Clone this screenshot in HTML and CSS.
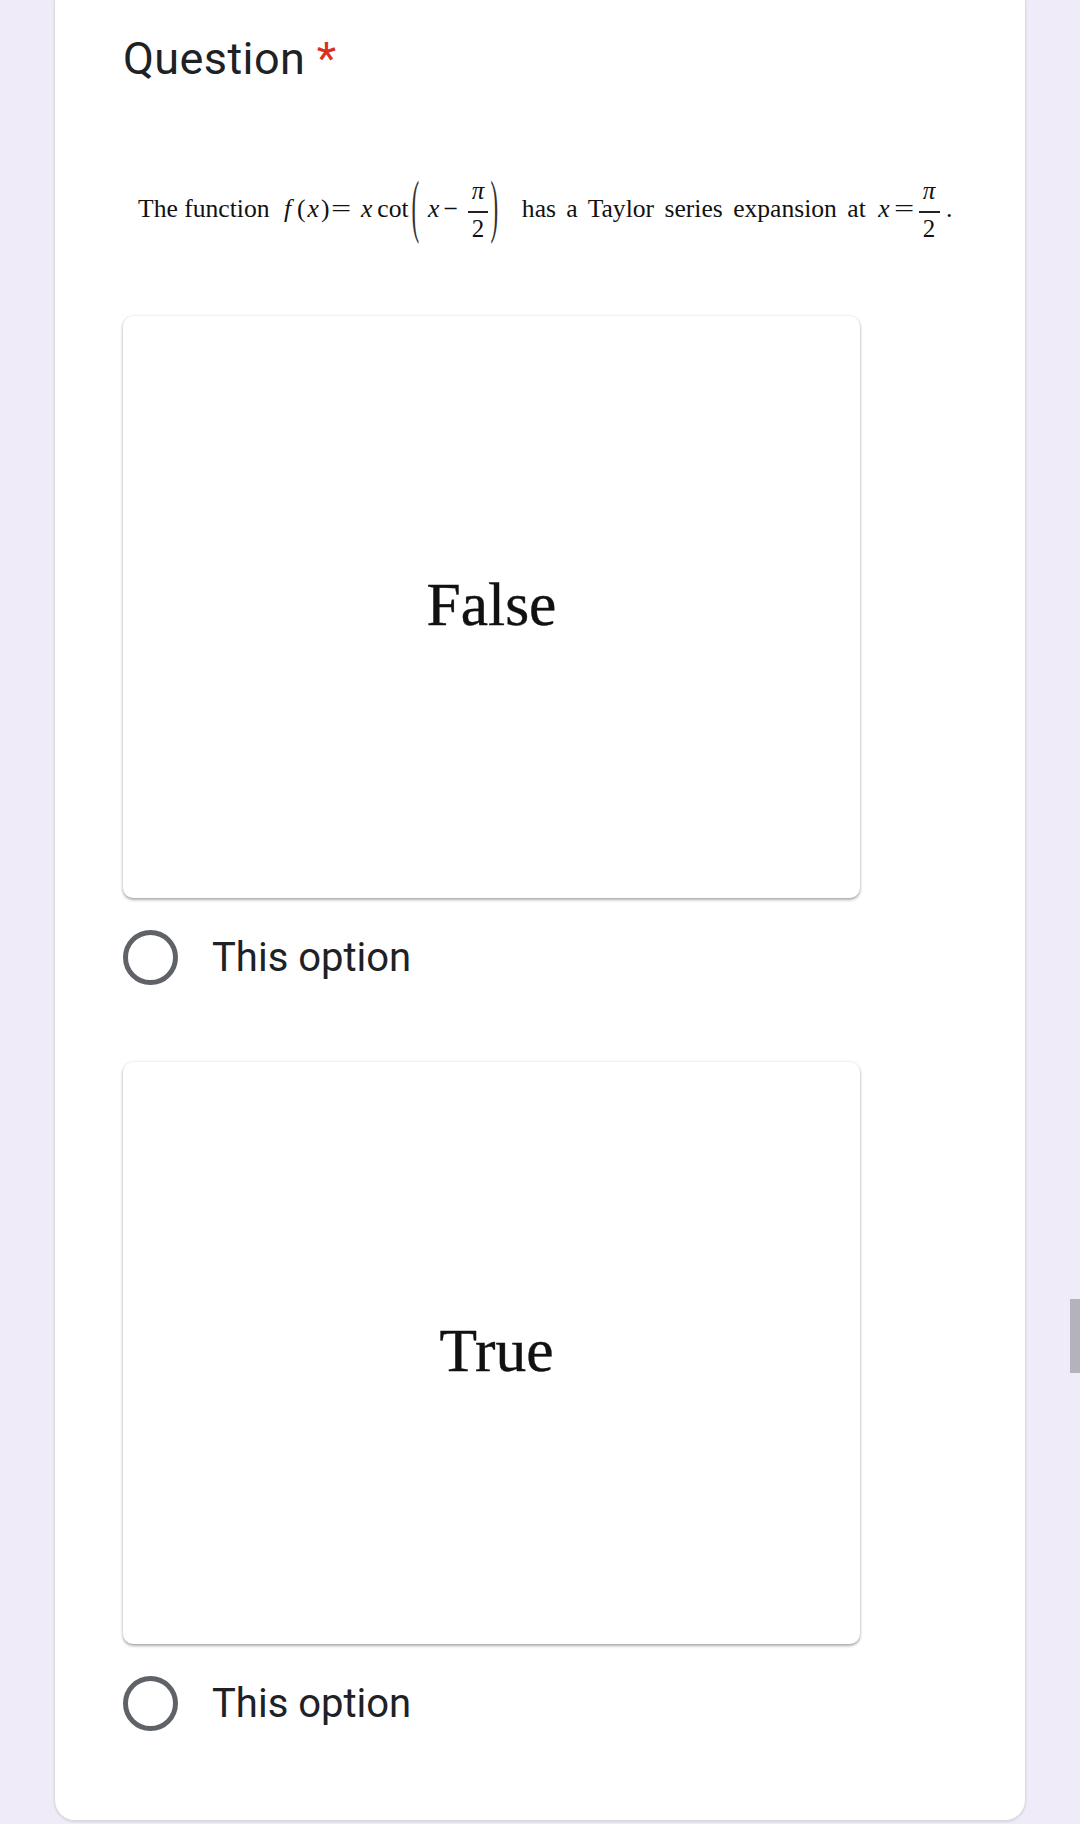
FILE: index.html
```html
<!DOCTYPE html>
<html lang="en">
<head>
    <meta charset="UTF-8">
    <meta name="viewport" content="width=device-width, initial-scale=1.0">
    <title>Question</title>
    <link rel="stylesheet" href="styles.css">
</head>
<body>
    <div class="form-card">
        <div class="question-title">Question <span class="required">*</span></div>

        <div class="math-line">
            <span class="word">The function</span>
            <span class="gap-lg"></span><span class="it f">f</span>(<span class="it x-in">x</span>)<span class="op eq">=</span><span class="it x-cot">x</span><span class="fn">cot</span><span class="paren left">(</span><span class="it">x</span><span class="op minus">&minus;</span><span class="frac"><span class="num">&pi;</span><span class="bar"></span><span class="den">2</span></span><span class="paren right">)</span><span class="gap-lg"></span>
            <span class="word wide">has a Taylor series expansion at</span>
            <span class="gap-md"></span><span class="it">x</span><span class="op eq-sm">=</span><span class="frac end"><span class="num">&pi;</span><span class="bar"></span><span class="den">2</span></span><span class="dot">.</span>
        </div>

        <div class="choice">
            <div class="choice-image"><span>False</span></div>
            <label class="choice-row">
                <span class="radio"></span>
                <span class="choice-label">This option</span>
            </label>
        </div>

        <div class="choice">
            <div class="choice-image"><span class="shift">True</span></div>
            <label class="choice-row">
                <span class="radio"></span>
                <span class="choice-label">This option</span>
            </label>
        </div>
    </div>

    <div class="scroll-thumb"></div>
</body>
</html>
```

FILE: styles.css
```css
html, body {
    margin: 0;
    padding: 0;
}
body {
    background: #f0ebf8;
    font-family: Roboto, "Noto Sans", Arial, sans-serif;
    height: 1824px;
    overflow: hidden;
    position: relative;
}
.form-card {
    margin: 0 54px;
    background: #fff;
    border: 1px solid #dadce0;
    border-top: none;
    border-radius: 0 0 21px 21px;
    padding: 31px 68px 89px 68px;
    box-shadow: 0 1px 2px rgba(60, 64, 67, 0.15);
}
.question-title {
    font-size: 45px;
    line-height: 56px;
    letter-spacing: 0.4px;
    color: #202124;
}
.required {
    color: #d93025;
}

/* equation line */
.math-line {
    margin-top: 94px;
    padding-left: 15px;
    font-family: "Liberation Serif", "Times New Roman", serif;
    font-size: 25.6px;
    line-height: 30px;
    color: #111;
    white-space: nowrap;
}
.word.wide {
    word-spacing: 4px;
}
.it {
    font-style: italic;
}
.f {
    margin-right: 6px;
}
.x-in {
    margin: 0 2px;
}
.x-cot {
    margin-right: 5px;
}
.gap-lg {
    display: inline-block;
    width: 8px;
}
.gap-md {
    display: inline-block;
    width: 6px;
}
.op {
    display: inline-block;
}
.eq {
    margin: 0 12px 0 5px;
    transform: scaleX(1.4);
}
.eq-sm {
    margin: 0 5px 0 7.5px;
    transform: scaleX(1.4);
}
.minus {
    margin: 0 8px 0 4px;
}
.paren {
    display: inline-block;
    transform: translateY(-5px) scale(0.9, 2.75);
    transform-origin: 50% 45%;
    color: #333;
}
.paren.left {
    margin: 0 9px 0 2px;
}
.paren.right {
    margin: 0 9px 0 0;
}
.frac {
    display: inline-flex;
    flex-direction: column;
    align-items: center;
    vertical-align: 18px;
    margin: 0 2px;
    min-width: 20px;
}
.num, .den {
    line-height: 20px;
    font-size: 25px;
}
.num {
    font-style: italic;
    padding-bottom: 10px;
}
.bar {
    width: 20px;
    height: 1.5px;
    background: #222;
}
.frac.end .bar {
    width: 21px;
}
.den {
    margin-top: 6.5px;
}
.dot {
    margin-left: 4.5px;
}

/* answer choices */
.choice {
    margin-top: 77px;
}
.choice-image {
    width: 737px;
    height: 582px;
    box-sizing: border-box;
    border-radius: 10px;
    background: #fff;
    box-shadow: 0 2px 3px rgba(0, 0, 0, 0.3), 0 0 3px rgba(0, 0, 0, 0.12);
    display: flex;
    align-items: center;
    justify-content: center;
    font-family: "Liberation Serif", "Times New Roman", serif;
    font-size: 61.5px;
    color: #111;
    -webkit-text-stroke: 0.4px #111;
}
.choice-image span {
    margin-top: -6px;
}
.choice-image .shift {
    margin-left: 10px;
}
.choice-row {
    margin-top: 32px;
    height: 55px;
    display: flex;
    align-items: center;
}
.radio {
    width: 55px;
    height: 55px;
    box-sizing: border-box;
    border: 5px solid #5f6368;
    border-radius: 50%;
    flex-shrink: 0;
}
.choice-label {
    margin-left: 34px;
    font-size: 40px;
    color: #202124;
}

.scroll-thumb {
    position: absolute;
    right: 0;
    top: 1299px;
    width: 10px;
    height: 74px;
    background: #b5b2bb;
}
```
